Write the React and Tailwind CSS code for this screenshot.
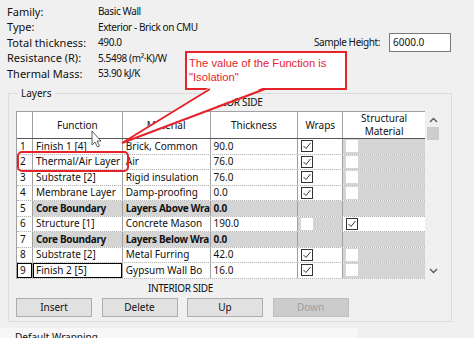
import React from "react";

const info = [
  ["Family:", "Basic Wall"],
  ["Type:", "Exterior - Brick on CMU"],
  ["Total thickness:", "490.0"],
  ["Resistance (R):", "5.5498 (m²·K)/W"],
  ["Thermal Mass:", "53.90 kJ/K"],
];

// kind: normal | core | struct
const layers = [
  { fn: "Finish 1 [4]", mat: "Brick, Common", th: "90.0", kind: "normal" },
  { fn: "Thermal/Air Layer", mat: "Air", th: "76.0", kind: "normal" },
  { fn: "Substrate [2]", mat: "Rigid insulation", th: "76.0", kind: "normal" },
  { fn: "Membrane Layer", mat: "Damp-proofing", th: "0.0", kind: "normal" },
  { fn: "Core Boundary", mat: "Layers Above Wra", th: "0.0", kind: "core" },
  { fn: "Structure [1]", mat: "Concrete Mason", th: "190.0", kind: "struct" },
  { fn: "Core Boundary", mat: "Layers Below Wra", th: "0.0", kind: "core" },
  { fn: "Substrate [2]", mat: "Metal Furring", th: "42.0", kind: "normal" },
  { fn: "Finish 2 [5]", mat: "Gypsum Wall Bo", th: "16.0", kind: "normal", selected: true },
];

function CheckBox({ checked }) {
  if (!checked) return <div className="w-[12px] h-[12px] bg-white" />;
  return (
    <div className="w-[12px] h-[12px] bg-white border border-[#333]">
      <svg width="10" height="10" viewBox="0 0 10 10">
        <path d="M1.5 5 L4 7.5 L8.5 2" fill="none" stroke="#333" strokeWidth="1" />
      </svg>
    </div>
  );
}

function Row({ n, row }) {
  const core = row.kind === "core";
  const cell = "h-full flex items-center px-[3px] border-r border-[#a0a0a0] whitespace-nowrap overflow-hidden";
  const grey = core ? "bg-[#d4d4d4] font-bold tracking-[-0.3px]" : "bg-white";
  return (
    <div className="flex h-[15.5px] border-b border-dotted border-[#b8b8b8]">
      <div className={`${cell} w-[16px] bg-white ${row.selected ? "ring-1 ring-inset ring-black" : ""}`}>{n}</div>
      <div className={`${cell} w-[90px] ${grey} ${row.selected ? "ring-1 ring-inset ring-black" : ""}`}>{row.fn}</div>
      <div className={`${cell} w-[88px] ${grey}`}>{row.mat}</div>
      <div className={`${cell} w-[88px] ${grey}`}>{row.th}</div>
      <div className={`${cell} w-[45px] ${row.kind === "normal" ? "bg-white" : "bg-[#d4d4d4]"}`}>
        {row.kind === "normal" && <CheckBox checked />}
        {row.kind === "struct" && <CheckBox />}
      </div>
      <div className={`${cell} w-[82px] ${row.kind === "struct" ? "bg-white" : "bg-[#d4d4d4]"} border-r-0`}>
        {row.kind === "normal" && <CheckBox />}
        {row.kind === "struct" && <CheckBox checked />}
      </div>
    </div>
  );
}

export default function App() {
  return (
    <div className="relative w-[474px] h-[338px] overflow-hidden bg-[#f0f0f0] text-[10px] text-[#111] font-['Segoe_UI','Noto_Sans',sans-serif]">
      <div className="pt-[4px]">
        {info.map(([label, value], i) => (
          <div key={label} className="flex items-center h-[15.5px] pl-[7px] whitespace-nowrap">
            <div className="w-[91px] text-[11px]">{label}</div>
            <div className="w-[216px] tracking-[-0.4px]">{value}</div>
            {i === 2 && (
              <div className="flex items-center">
                <div className="w-[75px] tracking-[-0.4px]">Sample Height:</div>
                <div className="w-[62px] h-[19px] bg-white border border-[#7a7a7a] flex items-center px-[3px]">6000.0</div>
              </div>
            )}
          </div>
        ))}
      </div>

      <fieldset className="mt-[6.5px] ml-[8px] w-[444px] h-[234px] border border-[#dcdcdc] px-[7px]">
        <legend className="ml-[2px] px-[3px] leading-[10px] h-[10px]">Layers</legend>
        <div className="-mt-[2px] h-[13px] leading-[13px] pl-[180px] tracking-[-0.3px]">EXTERIOR SIDE</div>
        <div className="mt-[2px] flex">
          <div className="w-[409px] border-l border-t border-[#a0a0a0]">
            <div className="flex h-[27px] bg-white border-b border-[#555]">
              <div className="w-[16px] border-r border-[#a0a0a0]" />
              <div className="w-[90px] border-r border-[#a0a0a0] flex items-center justify-center">Function</div>
              <div className="w-[88px] border-r border-[#a0a0a0] flex items-center justify-center">Material</div>
              <div className="w-[88px] border-r border-[#a0a0a0] flex items-center justify-center">Thickness</div>
              <div className="w-[45px] border-r border-[#a0a0a0] flex items-center justify-center">Wraps</div>
              <div className="w-[82px] flex items-center justify-center text-center leading-[13px]">Structural<br />Material</div>
            </div>
            {layers.map((row, i) => (
              <Row key={i} n={i + 1} row={row} />
            ))}
          </div>
          <div className="w-[16px] flex flex-col items-center">
            <svg width="9" height="6" viewBox="0 0 9 6" className="mt-[6px]">
              <path d="M1 5 L4.5 1.5 L8 5" fill="none" stroke="#555" strokeWidth="1.3" />
            </svg>
            <div className="mt-[4px] w-[12px] h-[13px] bg-[#cdcdcd]" />
            <div className="flex-1" />
            <svg width="9" height="6" viewBox="0 0 9 6" className="mb-[5px]">
              <path d="M1 1 L4.5 4.5 L8 1" fill="none" stroke="#555" strokeWidth="1.3" />
            </svg>
          </div>
        </div>
        <div className="mt-[2.5px] h-[14px] leading-[14px] pl-[132px] tracking-[-0.4px]">INTERIOR SIDE</div>
        <div className="mt-[3px] flex gap-[9.5px]">
          {["Insert", "Delete", "Up"].map((b) => (
            <div key={b} className="w-[76px] h-[19px] bg-[#e1e1e1] border border-[#adadad] flex items-center justify-center">{b}</div>
          ))}
          <div className="w-[76px] h-[19px] bg-[#cccccc] border border-[#bfbfbf] flex items-center justify-center text-[#a0a0a0]">Down</div>
        </div>
      </fieldset>

      <div className="mt-[6px] w-[358px] h-[16px] bg-[#f7f7f7] pl-[15px] leading-[18px]">Default Wrapping</div>

      {/* callout */}
      <div className="absolute left-[185px] top-[51px] w-[162px] h-[39px] bg-white border-2 border-[#e5232b] px-[2px] pt-[3px] text-[11.2px] leading-[14px] text-[#e5232b] font-['Liberation_Sans',Arial,sans-serif]">
        The value of the Function is<br />"Isolation"
      </div>
      <svg className="absolute left-0 top-0" width="474" height="338" viewBox="0 0 474 338">
        <polygon points="210,87 265,87 122,143" fill="white" />
        <path d="M210 89 L122 143 L265 89" fill="none" stroke="#e5232b" strokeWidth="2" strokeLinejoin="miter" />
        <rect x="18" y="152" width="110" height="19" rx="4" fill="none" stroke="#e5232b" strokeWidth="2" />
        <path d="M92 131 L92 145 L95 142 L97.5 147 L99.5 146 L97 141 L101 141 Z" fill="white" stroke="#333" strokeWidth="0.8" />
      </svg>
    </div>
  );
}
